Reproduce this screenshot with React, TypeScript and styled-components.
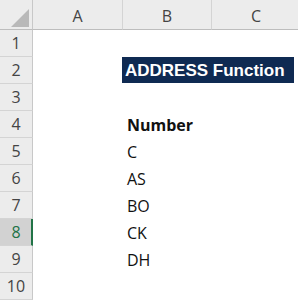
import styled, { createGlobalStyle } from "styled-components";

const GlobalStyle = createGlobalStyle`
  html, body {
    margin: 0;
    padding: 0;
    background: #ffffff;
    overflow: hidden;
  }
`;

const Sheet = styled.div`
  display: grid;
  grid-template-columns: 33px 90px 89px 89px;
  grid-template-rows: 30px repeat(10, 27px);
  width: 298px;
  height: 300px;
  overflow: hidden;
  font-family: "Open Sans", "Liberation Sans", sans-serif;
`;

const Corner = styled.div`
  position: relative;
  box-sizing: border-box;
  background: #ececec;
  border-right: 1px solid #c8c8c8;
  border-bottom: 1px solid #bdbdbd;
  svg {
    position: absolute;
    left: 0;
    top: 0;
  }
`;

const ColHeader = styled.div`
  box-sizing: border-box;
  background: #ececec;
  border-right: 1px solid #d4d4d4;
  border-bottom: 1px solid #bdbdbd;
  display: flex;
  justify-content: center;
  align-items: flex-end;
  padding-bottom: 3px;
  font-size: 16px;
  line-height: 20px;
  color: #444444;
`;

const RowHeader = styled.div<{ $selected?: boolean }>`
  box-sizing: border-box;
  background: ${(p) => (p.$selected ? "#d2d2d2" : "#ececec")};
  border-right: ${(p) => (p.$selected ? "2px solid #217346" : "1px solid #c8c8c8")};
  border-bottom: 1px solid #d4d4d4;
  display: flex;
  justify-content: center;
  align-items: center;
  padding-left: ${(p) => (p.$selected ? "1px" : "0")};
  font-size: 16px;
  line-height: 20px;
  color: ${(p) => (p.$selected ? "#217346" : "#444444")};
`;

const Cell = styled.div<{ $bold?: boolean }>`
  box-sizing: border-box;
  display: flex;
  align-items: flex-end;
  padding: 0 0 3px 4px;
  font-size: 16px;
  line-height: 20px;
  font-weight: ${(p) => (p.$bold ? 700 : 400)};
  color: #111111;
  white-space: nowrap;
`;

const BandCell = styled.div`
  grid-column: span 2;
  display: flex;
  align-items: stretch;
  margin-left: -1px;
  margin-right: 7px;
  margin-bottom: 1px;
`;

const Band = styled.div`
  flex: 1;
  background: #0f2a52;
  color: #ffffff;
  font-family: "Liberation Sans", Arial, sans-serif;
  font-weight: 700;
  font-size: 17px;
  display: flex;
  align-items: center;
  padding: 2px 0 0 3px;
  white-space: nowrap;
`;

const data: Record<number, { text: string; bold?: boolean }> = {
  4: { text: "Number", bold: true },
  5: { text: "C" },
  6: { text: "AS" },
  7: { text: "BO" },
  8: { text: "CK" },
  9: { text: "DH" },
};

export default function App() {
  const rows = Array.from({ length: 10 }, (_, i) => i + 1);
  return (
    <>
      <GlobalStyle />
      <Sheet>
        <Corner>
          <svg width="33" height="30" viewBox="0 0 33 30">
            <polygon points="11,27 29,9 29,27" fill="#b9b9b9" />
          </svg>
        </Corner>
        <ColHeader>A</ColHeader>
        <ColHeader>B</ColHeader>
        <ColHeader>C</ColHeader>
        {rows.map((r) => (
          <Row key={r} n={r} />
        ))}
      </Sheet>
    </>
  );
}

function Row({ n }: { n: number }) {
  const item = data[n];
  return (
    <>
      <RowHeader $selected={n === 8}>{n}</RowHeader>
      <Cell />
      {n === 2 ? (
        <BandCell>
          <Band>ADDRESS Function</Band>
        </BandCell>
      ) : (
        <>
          <Cell $bold={item?.bold}>{item?.text}</Cell>
          <Cell />
        </>
      )}
    </>
  );
}
